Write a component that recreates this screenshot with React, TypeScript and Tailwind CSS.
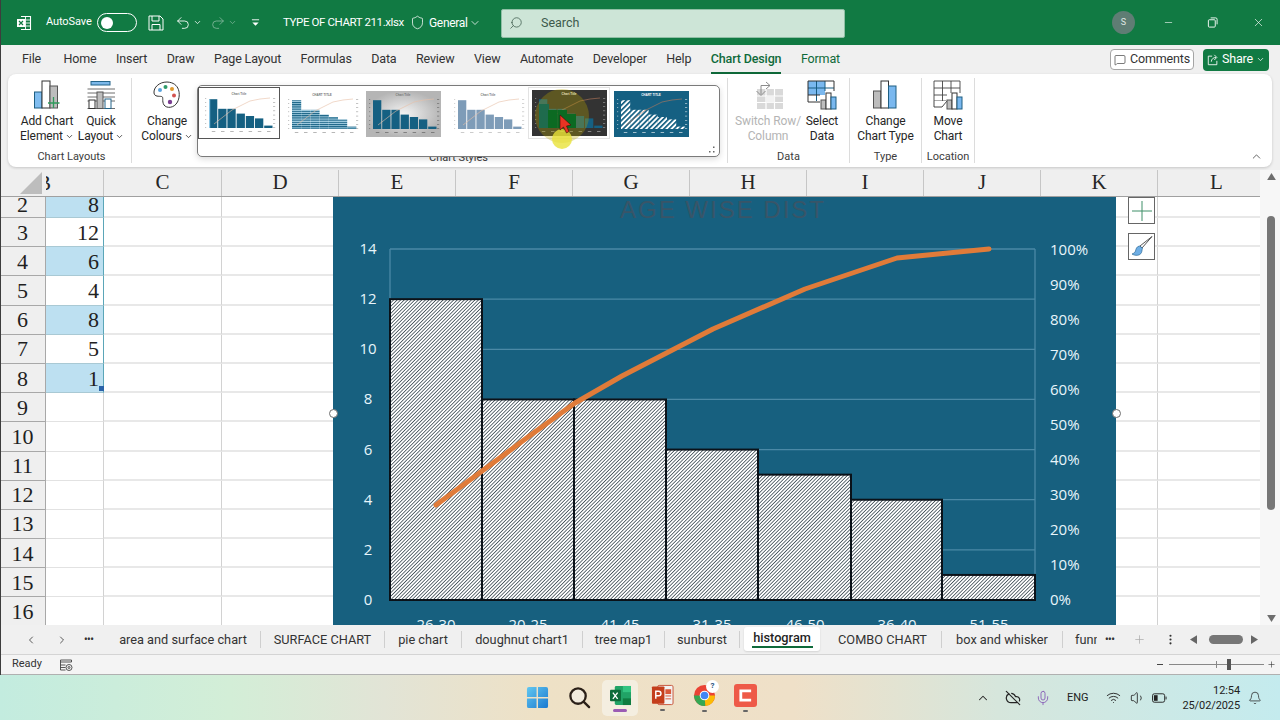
import React from "react";
import { Search, ChevronDown, ChevronUp, ChevronLeft, ChevronRight, Undo2, Redo2, Minus, X, Shield, MessageSquare, MoreVertical, Plus, Wifi, Volume1, Bell, Mic, CloudOff } from "lucide-react";

const bars = [12, 8, 8, 6, 5, 4, 1];
const barX = [390, 482, 574, 666, 758, 851, 942, 1035];
const y0 = 600;
const unit = 25.07;
const xLabels = ["26-30", "20-25", "41-45", "31-35", "46-50", "36-40", "51-55"];
const xCenters = [436, 528, 620, 712, 805, 897, 989];

function Chart() {
  return (
    <svg viewBox="333 197 783 428" className="block w-full h-full">
      <defs>
        <pattern id="hatch" width="2.5" height="2.5" patternUnits="userSpaceOnUse" patternTransform="rotate(45)">
          <rect width="2.5" height="2.5" fill="#ffffff" />
          <rect width="0.7" height="2.5" fill="#24343e" />
        </pattern>
      </defs>
      <rect x="333" y="197" width="783" height="428" fill="#17607f" />
      <text x="723" y="218" textAnchor="middle" fontSize="24" letterSpacing="2" fill="#385568" fontFamily="Liberation Sans, sans-serif">AGE WISE DIST</text>
      {[14, 12, 10, 8, 6, 4, 2].map((v) => (
        <line key={v} x1="390" x2="1035" y1={y0 - v * unit} y2={y0 - v * unit} stroke="#4b89a6" strokeWidth="1.3" />
      ))}
      <line x1="390" x2="390" y1="249" y2="600" stroke="#4b89a6" strokeWidth="1.3" />
      <line x1="1035" x2="1035" y1="249" y2="600" stroke="#4b89a6" strokeWidth="1.3" />
      {bars.map((v, i) => (
        <rect key={i} x={barX[i]} y={y0 - v * unit} width={barX[i + 1] - barX[i]} height={v * unit} fill="url(#hatch)" stroke="#0a1118" strokeWidth="2" />
      ))}
      <polyline points="436,505 528,437 575,403 622,376 713,329 805,289 897,258 989,249" fill="none" stroke="#e07b39" strokeWidth="5" strokeLinecap="round" strokeLinejoin="round" />
      {[14, 12, 10, 8, 6, 4, 2, 0].map((v) => (
        <text key={v} x="368" y={y0 - v * unit + 5} textAnchor="middle" fontSize="15" fill="#e8f5fb" fontFamily="Open Sans, sans-serif">{v}</text>
      ))}
      {[100, 90, 80, 70, 60, 50, 40, 30, 20, 10, 0].map((v, i) => (
        <text key={v} x="1050" y={249.5 + i * 35.05 + 5} fontSize="15" fill="#e8f5fb" fontFamily="Open Sans, sans-serif">{v}%</text>
      ))}
      {xLabels.map((l, i) => (
        <text key={l} x={xCenters[i]} y="630" textAnchor="middle" fontSize="15" fill="#e8f5fb" fontFamily="Open Sans, sans-serif">{l}</text>
      ))}
    </svg>
  );
}

type ThumbKind = "white" | "stripes" | "gray" | "pale" | "dark" | "blue";

function Thumb({ kind, id }: { kind: ThumbKind; id: string }) {
  const conf = {
    white: { bg: "#ffffff", bar: "#156082", axis: "#888", title: "Chart Title" },
    stripes: { bg: "#ffffff", bar: `url(#${id}s)`, axis: "#888", title: "CHART TITLE" },
    gray: { bg: `url(#${id}g)`, bar: "#156082", axis: "#555", title: "Chart Title" },
    pale: { bg: "#ffffff", bar: "#7e9cb8", axis: "#aaa", title: "Chart Title" },
    dark: { bg: "#333333", bar: "#156082", axis: "#bbb", title: "Chart Title" },
    blue: { bg: "#156082", bar: `url(#${id}d)`, axis: "#fff", title: "CHART TITLE" },
  }[kind];
  const light = kind === "dark" || kind === "blue";
  const x0 = 7;
  const w = 9.2;
  const base = 38;
  const u = 2.4;
  return (
    <svg viewBox="0 0 75 46" className="block w-[75px] h-[46px] overflow-visible">
      <defs>
        <pattern id={`${id}s`} width="3" height="2.2" patternUnits="userSpaceOnUse">
          <rect width="3" height="2.2" fill="#a9d3e6" />
          <rect width="3" height="1.1" fill="#156082" />
        </pattern>
        <pattern id={`${id}d`} width="3.6" height="3.6" patternUnits="userSpaceOnUse" patternTransform="rotate(45)">
          <rect width="3.6" height="3.6" fill="#ffffff" />
          <rect width="1.7" height="3.6" fill="#156082" />
        </pattern>
        <radialGradient id={`${id}g`}>
          <stop offset="0" stopColor="#f4f4f4" />
          <stop offset="1" stopColor="#b5b5b5" />
        </radialGradient>
      </defs>
      <rect width="75" height="46" fill={conf.bg} />
      <text x="37" y="5" textAnchor="middle" fontSize="3" fontWeight="700" fill={light ? "#ffffff" : "#777"} fontFamily="Liberation Sans, sans-serif">{conf.title}</text>
      {bars.map((v, i) => (
        <rect key={i} x={x0 + i * w} y={base - v * u} width={w - (kind === "stripes" || kind === "blue" ? 0 : 0.9)} height={v * u} fill={conf.bar} />
      ))}
      {kind === "white" && <rect x="7" y="9.200" width="1.200" height="28.800" fill="#8cc6e4" />}
      <polyline points="12,34 30,20 48,11 58,9 68,8" fill="none" stroke={light ? "#b7795a" : "#e8bfa6"} strokeWidth="0.6" />
      {[0, 1, 2, 3, 4, 5, 6, 7].map((i) => (
        <g key={i}>
          <rect x="3" y={8 + i * 4.2} width="1.2" height="0.5" fill={conf.axis} />
          <rect x="71" y={8 + i * 4.2} width="2.2" height="0.5" fill={conf.axis} />
        </g>
      ))}
      {[0, 1, 2, 3, 4, 5, 6].map((i) => (
        <rect key={i} x={x0 + i * w + 2.8} y="41" width="3.5" height="0.6" fill={conf.axis} />
      ))}
      {kind === "dark" && (
        <g>
          <circle cx="30" cy="26" r="27" fill="#b9a400" fillOpacity="0.32" />
          <circle cx="30" cy="49" r="10" fill="#e9e23a" fillOpacity="0.8" />
          <rect x="7" y="14" width="10" height="24" fill="#1f6b4d" />
          <rect x="16" y="20" width="9.5" height="18" fill="#0c6a22" />
          <rect x="25.5" y="20" width="9.5" height="18" fill="#0c6a22" />
          <rect x="35" y="24" width="9" height="14" fill="#0c6a22" />
          <path d="M28 25 L28 40 L31.500 37 L34.500 43 L37 41.5 L34.500 36 L39 35 Z" fill="#ea3323" stroke="#3a0d08" strokeWidth="0.6" />
        </g>
      )}
    </svg>
  );
}

const iconProps = { className: "block w-[30px] h-[30px]", viewBox: "0 0 30 30" };

function IconAddElement() {
  return (
    <svg {...iconProps}>
      <rect x="2.5" y="12" width="7.5" height="16" fill="#80bdf0" stroke="#1f5f82" />
      <rect x="10" y="1" width="8" height="27" fill="#fff" stroke="#333" />
      <rect x="18" y="6" width="7.5" height="22" fill="#bdbdbd" stroke="#555" />
      <path d="M21.5 17v11M16 23h11.5" stroke="#2f9a5b" strokeWidth="1.3" fill="none" />
    </svg>
  );
}
function IconQuickLayout() {
  return (
    <svg {...iconProps}>
      <rect x="5" y="1.5" width="19" height="3.5" fill="#7cb8ea" stroke="#24658a" />
      <path d="M1.5 9H29M1.5 13H29M1.5 17H29M1.5 21H29M1.5 28.5H29" stroke="#4a4a4a" strokeWidth="0.8" fill="none" />
      <rect x="3" y="20" width="6" height="8.5" fill="#fff" stroke="#333" />
      <rect x="11" y="12" width="6" height="16.5" fill="#bdbdbd" stroke="#555" />
      <rect x="19" y="19" width="6" height="9.5" fill="#fff" stroke="#24658a" />
    </svg>
  );
}
function IconPalette() {
  return (
    <svg {...iconProps}>
      <path d="M15 2C7 2 1.5 7.5 2 13c.5 4 5 3 7.5 3.5C12 17 9.500 21 12 25c2.500 3.500 10 3.500 13.500-3C29 15 28 2.500 15 2Z" fill="#fff" stroke="#333" strokeWidth="1" />
      <circle cx="8" cy="10" r="2" fill="#5ba3dd" />
      <circle cx="13.500" cy="7" r="2" fill="#2f9a6a" />
      <circle cx="20" cy="9" r="2" fill="#e09a2d" />
      <circle cx="22" cy="15.500" r="2" fill="#d4524f" />
      <circle cx="18" cy="22" r="2.200" fill="#7a3e91" />
    </svg>
  );
}
function IconSwitch() {
  return (
    <svg {...iconProps}>
      <rect x="4" y="9" width="26" height="20" fill="#d9d9d9" />
      <path d="M4 16h26M4 22.500h26M13 9v20M21.500 9v20" stroke="#fff" strokeWidth="1.200" />
      <rect x="13" y="16" width="8.500" height="6.500" fill="#f2f2f2" />
      <path d="M13 2l4 3.500-4 3.500M17 5.500H8v9M3.500 11l4.500 4.500 4.500-4.500" stroke="#8c8c8c" strokeWidth="1" fill="none" />
    </svg>
  );
}
function IconSelect() {
  return (
    <svg {...iconProps}>
      <rect x="1" y="1" width="17" height="14" fill="#7ab8ef" />
      <path d="M1 8h26M9.500 1v20M18 1v10" stroke="#185c82" strokeWidth="1" />
      <path d="M1 1h26v10M1 1v21h12M1 15h12" stroke="#333" strokeWidth="1" fill="none" />
      <rect x="14" y="20" width="5" height="9" fill="#bdbdbd" stroke="#555" />
      <rect x="19" y="13" width="5" height="16" fill="#fff" stroke="#333" />
      <rect x="24" y="17" width="5" height="12" fill="#7ab8ef" stroke="#1f5f82" />
    </svg>
  );
}
function IconChangeType() {
  return (
    <svg {...iconProps}>
      <rect x="2.500" y="11" width="7.500" height="17" fill="#bdbdbd" stroke="#555" />
      <rect x="10" y="1" width="7.500" height="27" fill="#fff" stroke="#333" />
      <rect x="17.500" y="6" width="7.500" height="22" fill="#7ab8ef" stroke="#1f5f82" />
    </svg>
  );
}
function IconMove() {
  return (
    <svg {...iconProps}>
      <path d="M1 1h26v12M1 1v20h12M1 8h26M1 15h13M9.500 1v20M18 1v12" stroke="#444" strokeWidth="0.9" fill="none" />
      <path d="M1 21l0 6h8l5-6" stroke="#333" strokeWidth="0.9" fill="#fff" />
      <rect x="14" y="20" width="5" height="9" fill="#bdbdbd" stroke="#555" />
      <rect x="19" y="13" width="5" height="16" fill="#fff" stroke="#333" />
      <rect x="24" y="17" width="5" height="12" fill="#7ab8ef" stroke="#1f5f82" />
    </svg>
  );
}

function RibbonBtn({ icon, l1, l2, w, dim, caret }: { icon: React.ReactNode; l1: string; l2: string; w: string; dim?: boolean; caret?: boolean }) {
  return (
    <div className={`flex flex-col items-center ${w}`}>
      <div className="mt-[1px] h-[32px] flex items-center justify-center">{icon}</div>
      <div className={`mt-[3px] text-center text-[12px] tracking-[-0.1px] leading-[15px] whitespace-nowrap ${dim ? "text-[#b4b4b4]" : "text-[#262626]"}`}>
        <div>{l1}</div>
        <div className="flex items-center justify-center gap-[2px]">
          {l2}
          {caret && <ChevronDown size={9} strokeWidth={2} />}
        </div>
      </div>
    </div>
  );
}

function GroupLabel({ children }: { children: React.ReactNode }) {
  return <div className="text-[11px] leading-[14px] text-[#3c3c3c] text-center whitespace-nowrap">{children}</div>;
}

const topTabs = ["Home", "Insert", "Draw", "Page Layout", "Formulas", "Data", "Review", "View", "Automate", "Developer", "Help"];
const colLetters = [
  { l: "C", w: "w-[118px]" },
  { l: "D", w: "w-[117px]" },
  { l: "E", w: "w-[117px]" },
  { l: "F", w: "w-[117px]" },
  { l: "G", w: "w-[117px]" },
  { l: "H", w: "w-[117px]" },
  { l: "I", w: "w-[117px]" },
  { l: "J", w: "w-[117px]" },
  { l: "K", w: "w-[117px]" },
  { l: "L", w: "w-[103px] pl-[15px]" },
];
const rows = [
  { n: 2, v: "8", blue: true },
  { n: 3, v: "12" },
  { n: 4, v: "6", blue: true },
  { n: 5, v: "4" },
  { n: 6, v: "8", blue: true },
  { n: 7, v: "5" },
  { n: 8, v: "1", blue: true },
  { n: 9 }, { n: 10 }, { n: 11 }, { n: 12 }, { n: 13 }, { n: 14 }, { n: 15 }, { n: 16 },
] as { n: number; v?: string; blue?: boolean }[];

const sheetTabs = [
  { t: "area and surface chart", w: "w-[155px]" },
  { t: "SURFACE CHART", w: "w-[124px]" },
  { t: "pie chart", w: "w-[77px]" },
  { t: "doughnut chart1", w: "w-[121px]" },
  { t: "tree map1", w: "w-[82px]" },
  { t: "sunburst", w: "w-[75px]" },
  { t: "histogram", w: "w-[76px] mx-[4px]", active: true },
  { t: "COMBO CHART", w: "w-[118px]" },
  { t: "box and whisker", w: "w-[121px]" },
];

const serif = "font-['Liberation_Serif',serif]";

export default function App() {
  return (
    <div className="relative w-[1280px] h-[720px] overflow-hidden flex flex-col bg-[#f0f0f0] font-['Roboto',sans-serif] text-[#262626]">
      {/* title bar */}
      <div className="h-[45px] shrink-0 bg-[#117a43] text-white flex items-center text-[12px]">
        <div className="ml-[16px] w-[16px] h-[16px]">
          <svg viewBox="0 0 16 16" className="block w-[16px] h-[16px]">
            <path d="M5 1.500h9.500v13H5" fill="none" stroke="#fff" strokeWidth="1.100" />
            <path d="M9.500 1.500v13M9.500 5h5M9.500 8h5M9.500 11h5" stroke="#fff" strokeWidth="0.900" />
            <rect x="1" y="4" width="8" height="8" fill="#fff" />
            <path d="M3 6l4 4M7 6l-4 4" stroke="#117a43" strokeWidth="1.200" />
          </svg>
        </div>
        <span className="ml-[14px] w-[44px] text-[11px] tracking-[-0.1px] whitespace-nowrap">AutoSave</span>
        <div className="ml-[7px] w-[40px] h-[19px] rounded-full border border-white flex items-center pl-[3px]">
          <div className="w-[12px] h-[12px] rounded-full bg-white" />
        </div>
        <svg viewBox="0 0 16 16" className="ml-[11px] w-[16px] h-[16px]" fill="none" stroke="#fff" strokeWidth="1">
          <path d="M1 1h11l3 3v11H1zM4 1v5h7V1M4 15V9.500h8V15" />
        </svg>
        <Undo2 className="ml-[11px]" size={16} strokeWidth={1.3} />
        <ChevronDown className="ml-[2px]" size={9} />
        <Redo2 className="ml-[8px] text-[#7fb69a]" size={16} strokeWidth={1.3} />
        <ChevronDown className="ml-[2px] text-[#7fb69a]" size={9} />
        <svg viewBox="0 0 10 10" className="ml-[14px] w-[9px] h-[9px]" fill="#fff">
          <rect x="1" y="1.500" width="8" height="1" />
          <path d="M1.500 5h7L5 8.500z" />
        </svg>
        <span className="ml-[23px] w-[121px] text-[11.5px] tracking-[-0.4px] whitespace-nowrap">TYPE OF CHART 211.xlsx</span>
        <Shield className="ml-[6px]" size={15} strokeWidth={1.2} />
        <span className="ml-[4px] w-[37px] tracking-[-0.3px]">General</span>
        <ChevronDown className="ml-[3px]" size={12} strokeWidth={1.5} />
        <div className="ml-[20px] mt-[1px] w-[344px] h-[29px] bg-[#cde5d7] border border-[#8fbfa5] rounded-[2px] flex items-center pl-[6px] text-[#3d5a4b]">
          <Search size={14} strokeWidth={1.3} className="-scale-x-100 ml-[1px]" />
          <span className="ml-[18px] text-[12.5px]">Search</span>
        </div>
        <div className="ml-[267px] w-[23px] h-[23px] rounded-full bg-[#5f7d74] flex items-center justify-center text-[9px] text-[#dfe8e4]">S</div>
        <Minus className="ml-[28px]" size={11} strokeWidth={1.3} />
        <svg viewBox="0 0 12 12" className="ml-[33px] w-[11px] h-[11px]" fill="none" stroke="#fff" strokeWidth="1">
          <rect x="1.500" y="3" width="7.500" height="8" rx="1" />
          <path d="M4 1h5.500a1.500 1.500 0 0 1 1.500 1.500V8" />
        </svg>
        <X className="ml-[34px]" size={13} strokeWidth={1.2} />
      </div>

      {/* tabs */}
      <div className="h-[29px] shrink-0 flex items-center pl-[22px] text-[12.5px] tracking-[-0.15px] text-[#333]">
        <div className="flex gap-[19.5px] items-center">
          <span className="mr-[3px] whitespace-nowrap">File</span>
          {topTabs.map((t) => (
            <span key={t} className="whitespace-nowrap">{t}</span>
          ))}
          <span className="relative whitespace-nowrap text-[#0f6a3a] font-medium">
            Chart Design
            <span className="absolute left-0 right-0 -bottom-[5px] h-[2px] bg-[#0f6a3a]" />
          </span>
          <span className="text-[#0f6a3a] whitespace-nowrap">Format</span>
        </div>
        <div className="ml-auto mr-[11px] flex items-center gap-[9px]">
          <div className="w-[84px] h-[21px] rounded-[4px] border border-[#a5a5a5] bg-white flex items-center justify-center gap-[4px]">
            <MessageSquare size={12} strokeWidth={1.3} />
            <span>Comments</span>
          </div>
          <div className="w-[66px] h-[22px] rounded-[4px] bg-[#117a43] text-white flex items-center justify-center gap-[3px]">
            <svg viewBox="0 0 14 14" className="w-[12px] h-[12px]" fill="none" stroke="#fff" strokeWidth="1">
              <path d="M6 2.500H1.500v10h10V8M5 9c0-3 2.500-5 5.500-5M8.500 1l3 3-3 3" />
            </svg>
            <span>Share</span>
            <ChevronDown size={9} />
          </div>
        </div>
      </div>

      {/* ribbon */}
      <div className="h-[96px] shrink-0">
        <div className="mx-[8px] h-[93px] bg-white rounded-[8px] shadow-[0_1px_3px_rgba(0,0,0,0.18)] flex relative">
          <div className="w-[124px] ml-0 border-r border-[#dcdcdc] my-[4px] flex flex-col items-center">
            <div className="flex self-start shrink-0 pl-[8px] h-[70px]">
              <RibbonBtn w="w-[62px]" icon={<IconAddElement />} l1="Add Chart" l2="Element" caret />
              <RibbonBtn w="w-[46px]" icon={<IconQuickLayout />} l1="Quick" l2="Layout" caret />
            </div>
            <div className="mt-[2px] pl-[4px]"><GroupLabel>Chart Layouts</GroupLabel></div>
          </div>
          <div className="w-[60px] ml-[1px] my-[4px]">
            <RibbonBtn w="w-[68px]" icon={<IconPalette />} l1="Change" l2="Colours" caret />
          </div>
          <div className="ml-[4px] w-[523px] flex flex-col items-center pt-[11px]">
            <div className="relative z-10 shrink-0 w-[523px] h-[72px] rounded-[5px] border border-[#7a7a7a] bg-white shadow-[0_2px_6px_rgba(0,0,0,0.15)] flex items-start pt-[1px]">
              <div className="w-[82px] h-[52px] border-[1.5px] border-[#555] flex items-center justify-center"><Thumb kind="white" id="a" /></div>
              <div className="ml-[5px] w-[75px] mt-[4px]"><Thumb kind="stripes" id="b" /></div>
              <div className="ml-[6px] w-[75px] mt-[4px]"><Thumb kind="gray" id="c" /></div>
              <div className="ml-[10px] w-[75px] mt-[4px]"><Thumb kind="pale" id="e" /></div>
              <div className="ml-[2px] w-[82px] h-[52px] border border-[#e3e3e3] flex items-center justify-center"><Thumb kind="dark" id="f" /></div>
              <div className="ml-[4px] w-[75px] mt-[4px]"><Thumb kind="blue" id="g" /></div>
              <svg viewBox="0 0 8 8" className="absolute right-[3px] bottom-[2px] w-[8px] h-[8px]" fill="#666">
                <rect x="5" y="0.500" width="1.500" height="1.500" />
                <rect x="5" y="5" width="1.500" height="1.500" />
                <rect x="1" y="5" width="1.500" height="1.500" />
              </svg>
            </div>
            <div className="-mt-[6px]"><GroupLabel>Chart Styles</GroupLabel></div>
          </div>
          <div className="ml-[7px] my-[4px] w-[123px] border-l border-r border-[#dcdcdc] flex flex-col items-center">
            <div className="flex self-start shrink-0 h-[70px]">
              <RibbonBtn dim w="w-[80px]" icon={<IconSwitch />} l1="Switch Row/" l2="Column" />
              <RibbonBtn w="w-[28px]" icon={<IconSelect />} l1="Select" l2="Data" />
            </div>
            <div className="mt-[2px]"><GroupLabel>Data</GroupLabel></div>
          </div>
          <div className="my-[4px] w-[72px] border-r border-[#dcdcdc] flex flex-col items-center">
            <div className="h-[70px] shrink-0"><RibbonBtn w="w-[70px]" icon={<IconChangeType />} l1="Change" l2="Chart Type" /></div>
            <div className="mt-[2px]"><GroupLabel>Type</GroupLabel></div>
          </div>
          <div className="my-[4px] w-[53px] border-r border-[#dcdcdc] flex flex-col items-center">
            <div className="h-[70px] shrink-0"><RibbonBtn w="w-[50px]" icon={<IconMove />} l1="Move" l2="Chart" /></div>
            <div className="mt-[2px]"><GroupLabel>Location</GroupLabel></div>
          </div>
          <ChevronUp className="absolute right-[9px] bottom-[4px]" size={13} strokeWidth={1.3} />
        </div>
      </div>

      {/* sheet */}
      <div className="relative flex-1 min-h-0 flex overflow-hidden bg-white">
        <div className="w-[1260px] overflow-hidden">
          <div className="h-[27px] flex bg-[#efefef] border-b border-[#a0a0a0]">
            <div className="relative w-[46px] shrink-0">
              <div className="absolute left-[20px] top-[2px] w-0 h-0 border-l-[22px] border-l-transparent border-b-[22px] border-b-[#bdbdbd]" />
            </div>
            <div className={`w-[58px] shrink-0 overflow-hidden border-r border-[#c6c6c6] text-[21px] leading-[26px] ${serif}`}>
              <span className="block -ml-[9px]">B</span>
            </div>
            {colLetters.map((c) => (
              <div key={c.l} className={`${c.w} shrink-0 border-r border-[#c6c6c6] flex items-center justify-center text-[21px] ${serif}`}>{c.l}</div>
            ))}
          </div>
          {rows.map((r) => (
            <div key={r.n} className={`flex ${r.n === 2 ? "h-[21px]" : "h-[29.2px]"} ${serif}`}>
              <div className={`w-[46px] shrink-0 bg-[#efefef] border-b border-r border-[#a8a8a8] flex items-center justify-center text-[22px] leading-[24px] text-[#1f1f1f] overflow-hidden ${r.n === 2 ? "pb-[4px]" : "pt-[1px]"}`}>{r.n}</div>
              <div className={`w-[58px] shrink-0 border-r flex items-center justify-end pr-[4px] text-[22px] leading-[24px] text-[#222] border-b overflow-hidden ${r.n === 2 ? "pb-[4px]" : "pt-[1px]"} ${r.blue ? "bg-[#bde0f1]" : "bg-white"} ${r.v ? "border-r-[#5ba6b8] border-b-[#a9c9d4]" : "border-r-[#d2d2d2] border-b-[#e2e2e2]"}`}>{r.v}</div>
              {colLetters.map((c) => (
                <div key={c.l} className={`${c.w} shrink-0 border-r border-r-[#d2d2d2] border-b-2 border-b-[#e8e8e8]`} />
              ))}
            </div>
          ))}
        </div>
        <div className="w-[20px] shrink-0 bg-[#f7f7f7] flex flex-col items-center relative">
          <svg viewBox="0 0 10 8" className="mt-[3px] ml-[2px] w-[9px] h-[7px]" fill="#6e6e6e"><path d="M5 0l5 8H0z" /></svg>
          <div className="mt-[36px] ml-[2px] w-[8px] h-[294px] rounded-full bg-[#767676]" />
          <svg viewBox="0 0 10 8" className="mt-auto mb-[3px] ml-[2px] w-[9px] h-[7px]" fill="#6e6e6e"><path d="M5 8l5-8H0z" /></svg>
        </div>

        {/* selection handle */}
        <div className="absolute left-[99px] top-[216px] w-[5px] h-[5px] bg-[#2a62a8]" />
        {/* chart overlay */}
        <div className="absolute left-[333px] top-[27px] w-[783px] h-[428px]"><Chart /></div>
        <div className="absolute left-[329px] top-[239px] w-[9px] h-[9px] rounded-full bg-white border border-[#6e6e6e]" />
        <div className="absolute left-[1112px] top-[239px] w-[9px] h-[9px] rounded-full bg-white border border-[#6e6e6e]" />
        <div className="absolute left-[1128px] top-[27px] w-[27px] h-[27px] bg-white border border-[#666] flex items-center justify-center">
          <svg viewBox="0 0 22 22" className="w-[22px] h-[22px]"><path d="M11 1v20M1 11h20" stroke="#3f8f68" strokeWidth="1" /></svg>
        </div>
        <div className="absolute left-[1128px] top-[63px] w-[27px] h-[27px] bg-white border border-[#666] flex items-center justify-center">
          <svg viewBox="0 0 24 24" className="w-[24px] h-[24px]">
            <path d="M22 1.500L12 13l-2-2z" fill="#fff" stroke="#444" strokeWidth="0.900" />
            <path d="M9.500 11c-3 .5-3.500 3-4 5-.4 1.500-2 2.500-3.500 3 3 2 8 2 9.500-1.500.7-1.800.5-3.500 1-4.500z" fill="#6eaee5" stroke="#2c6a96" strokeWidth="0.700" />
          </svg>
        </div>
      </div>

      {/* sheet tabs */}
      <div className="h-[30px] shrink-0 border-b border-[#d4d4d4] flex items-center text-[12.75px] text-[#333] bg-[#f0f0f0]">
        <ChevronLeft className="ml-[25px]" size={12} strokeWidth={1.6} />
        <ChevronRight className="ml-[19px]" size={12} strokeWidth={1.6} />
        <span className="ml-[16px] w-[12px] text-[10px] font-bold leading-none tracking-[-0.5px]">•••</span>
        <div className="ml-[10px] flex items-center h-full">
          {sheetTabs.map((t) => (
            t.active ? (
              <div key={t.t} className={`${t.w} h-[24px] -mt-[2px] rounded-[3px] bg-white flex flex-col items-center justify-center font-medium text-[#1f1f1f] shadow-[0_1px_2px_rgba(0,0,0,0.12)]`}>
                <span className="leading-[16px]">{t.t}</span>
                <span className="w-[61px] h-[2px] bg-[#0f6a3a]" />
              </div>
            ) : (
              <div key={t.t} className={`${t.w} h-[17px] border-r border-[#cfcfcf] flex items-center justify-center whitespace-nowrap`}>{t.t}</div>
            )
          ))}
          <div className="w-[34px] pl-[12px] overflow-hidden whitespace-nowrap">funnel</div>
        </div>
        <span className="ml-[8px] w-[12px] text-[10px] font-bold leading-none tracking-[-0.5px]">•••</span>
        <Plus className="ml-[16px] text-[#a8a8a8]" size={13} strokeWidth={1.3} />
        <MoreVertical className="ml-[18px]" size={13} strokeWidth={2} />
        <svg viewBox="0 0 8 10" className="ml-[13px] w-[7px] h-[9px]" fill="#666"><path d="M8 0v10L0 5z" /></svg>
        <div className="ml-[12px] w-[34px] h-[9px] rounded-full bg-[#777]" />
        <svg viewBox="0 0 8 10" className="ml-[8px] w-[7px] h-[9px]" fill="#666"><path d="M0 0v10l8-5z" /></svg>
      </div>

      {/* status */}
      <div className="h-[20px] shrink-0 bg-[#f4f4f4] flex items-center text-[11px] text-[#333] border-b border-[#b0b0b0]">
        <span className="ml-[12px]">Ready</span>
        <svg viewBox="0 0 14 14" className="ml-[17px] w-[14px] h-[14px]" fill="none" stroke="#444" strokeWidth="0.900">
          <path d="M1.500 2h11v2h-11zM1.500 4v8h5M1.500 7h5M1.500 9.500h5" />
          <circle cx="10" cy="9.500" r="3" />
          <circle cx="10" cy="9.500" r="1" />
        </svg>
        <div className="ml-auto flex items-center mr-[4px]">
          <span className="w-[6px] h-[1.5px] bg-[#444]" />
          <div className="relative ml-[6px] w-[95px] h-[1px] bg-[#888]">
            <span className="absolute left-[47px] -top-[3px] w-[1px] h-[7px] bg-[#888]" />
            <span className="absolute left-[58px] -top-[5px] w-[4px] h-[11px] bg-[#555]" />
          </div>
          <Plus className="ml-[3px]" size={9} strokeWidth={1.6} />
        </div>
      </div>

      {/* taskbar */}
      <div className="h-[45px] shrink-0 flex items-center bg-[linear-gradient(90deg,#c3ecdf_0%,#d3eed7_18%,#e2e4d6_30%,#eee1c6_42%,#efe0c8_62%,#d6e6dc_78%,#c4ebee_100%)]">
        <svg viewBox="0 0 24 24" className="ml-[526px] w-[23px] h-[23px]">
          <defs>
            <linearGradient id="win" x1="0" y1="0" x2="1" y2="1">
              <stop offset="0" stopColor="#62c8f0" />
              <stop offset="1" stopColor="#1a78d0" />
            </linearGradient>
          </defs>
          <path d="M1 3a2 2 0 0 1 2-2h8v10.500H1zM12.500 1H21a2 2 0 0 1 2 2v8.500H12.500zM1 13h10v10H3a2 2 0 0 1-2-2zM12.500 13H23v8a2 2 0 0 1-2 2h-8.500z" fill="url(#win)" />
        </svg>
        <svg viewBox="0 0 24 24" className="ml-[19px] w-[23px] h-[23px]" fill="none" stroke="#2b2018" strokeWidth="2.400" strokeLinecap="round">
          <circle cx="10.500" cy="10.500" r="8" fill="#f2ebdd" />
          <path d="M16.500 16.500L22 22" />
        </svg>
        <div className="ml-[11px] w-[36px] h-[36px] rounded-[5px] bg-[#f4eee0] flex flex-col items-center justify-center">
          <svg viewBox="0 0 24 22" className="w-[23px] h-[21px] mt-[2px]">
            <rect x="6" y="1" width="17" height="20" rx="1.500" fill="#21a366" />
            <rect x="14.500" y="1" width="8.500" height="6.500" fill="#33c481" />
            <rect x="14.500" y="14" width="8.500" height="7" fill="#107c41" />
            <rect x="1" y="5" width="11.500" height="12" rx="1" fill="#0e6b39" />
            <path d="M4 8l5 6.500M9 8l-5 6.500" stroke="#fff" strokeWidth="1.400" />
          </svg>
          <span className="mt-[3px] w-[14px] h-[3px] rounded-full bg-[#9c5cb4]" />
        </div>
        <div className="ml-[8px] w-[32px] flex flex-col items-center">
          <svg viewBox="0 0 24 22" className="w-[23px] h-[22px]">
            <rect x="7" y="1" width="16" height="20" rx="1.500" fill="#f3f3f3" stroke="#c8543a" />
            <rect x="15" y="5" width="6" height="5" fill="#d9583a" />
            <path d="M15 12h6M15 15h6" stroke="#d9583a" />
            <rect x="1" y="2" width="13" height="18" rx="1" fill="#c43e1c" />
            <path d="M5 15V7h3a2.300 2.300 0 0 1 0 4.800H5" fill="none" stroke="#fff" strokeWidth="1.500" />
          </svg>
          <span className="mt-[3px] w-[5px] h-[2px] rounded-full bg-[#666]" />
        </div>
        <div className="relative ml-[10px] w-[32px] flex flex-col items-center">
          <svg viewBox="0 0 24 24" className="w-[23px] h-[23px]">
            <circle cx="12" cy="12" r="11" fill="#ea4335" />
            <path d="M12 12L2.500 17.500A11 11 0 0 0 13 23z" fill="#34a853" />
            <path d="M1 12a11 11 0 0 0 1.500 5.500L12 12z" fill="#34a853" />
            <path d="M12 12l1 11A11 11 0 0 0 23 12z" fill="#fbbc05" />
            <circle cx="12" cy="12" r="5" fill="#fff" />
            <circle cx="12" cy="12" r="4" fill="#4285f4" />
          </svg>
          <span className="mt-[3px] w-[5px] h-[2px] rounded-full bg-[#666]" />
          <span className="absolute left-[18px] -top-[4px] w-[13px] h-[13px] rounded-full bg-white flex items-center justify-center text-[8px] font-bold text-[#27507c]">?</span>
        </div>
        <div className="ml-[9px] w-[32px] flex flex-col items-center">
          <div className="w-[23px] h-[23px] rounded-[3px] bg-[#ee5a48] flex items-center justify-center">
            <svg viewBox="0 0 16 16" className="w-[15px] h-[15px]" fill="none" stroke="#fff" strokeWidth="3"><path d="M14 3H3v10h11" /></svg>
          </div>
          <span className="mt-[3px] w-[5px] h-[2px] rounded-full bg-[#666]" />
        </div>
        <ChevronUp className="ml-[215px]" size={14} strokeWidth={1.8} />
        <CloudOff className="ml-[15px]" size={16} strokeWidth={1.8} />
        <Mic className="ml-[14px] text-[#8a63b8]" size={16} strokeWidth={1.4} />
        <span className="ml-[16px] pt-[2px] text-[11px] w-[24px] text-[#222]">ENG</span>
        <Wifi className="ml-[15px]" size={15} strokeWidth={1.5} />
        <Volume1 className="ml-[9px]" size={16} strokeWidth={1.3} />
        <svg viewBox="0 0 16 10" className="ml-[6px] w-[15px] h-[10px]" fill="none" stroke="#222" strokeWidth="1">
          <rect x="0.500" y="0.500" width="13" height="9" rx="2" />
          <rect x="2" y="2" width="4" height="6" fill="#222" stroke="none" />
          <path d="M15 3.500v3" />
        </svg>
        <div className="ml-[8px] w-[65px] text-right text-[11px] tracking-[-0.1px] leading-[15px] text-[#222]">
          <div>12:54</div>
          <div>25/02/2025</div>
        </div>
        <Bell className="ml-[8px]" size={14} strokeWidth={1.3} />
      </div>
      <div className="absolute left-0 top-0 w-px h-[675px] bg-[#3d3d3d]" />
    </div>
  );
}
